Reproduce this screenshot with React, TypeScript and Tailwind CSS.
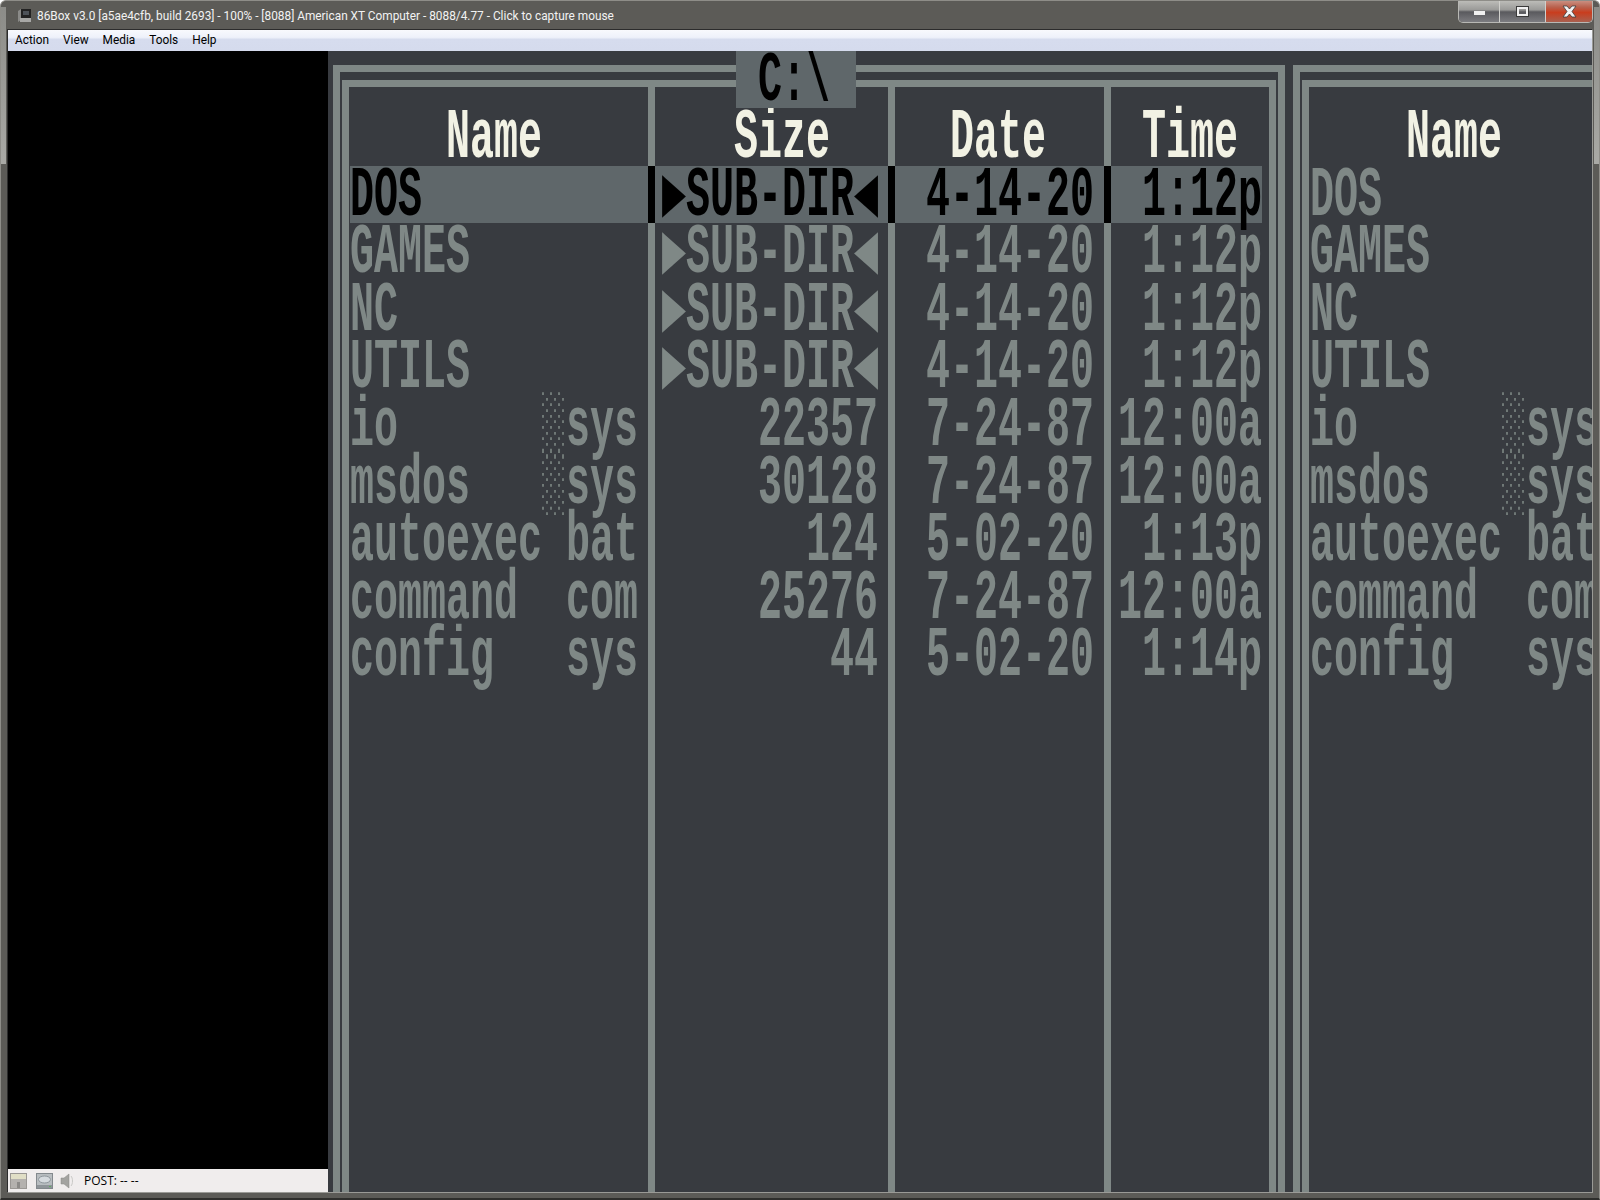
// App.tsx
// 86Box window running Norton Commander on an emulated text screen

const PANEL_ROWS: [string, string, string, string][] = [
  ["DOS", "▶SUB-DIR◀", " 4-14-20", " 1:12p"],
  ["GAMES", "▶SUB-DIR◀", " 4-14-20", " 1:12p"],
  ["NC", "▶SUB-DIR◀", " 4-14-20", " 1:12p"],
  ["UTILS", "▶SUB-DIR◀", " 4-14-20", " 1:12p"],
  ["io      ░sys", "    22357", " 7-24-87", "12:00a"],
  ["msdos   ░sys", "    30128", " 7-24-87", "12:00a"],
  ["autoexec bat", "      124", " 5-02-20", " 1:13p"],
  ["command  com", "    25276", " 7-24-87", "12:00a"],
  ["config   sys", "       44", " 5-02-20", " 1:14p"],
];

// one stretched character-cell run, real text scaled like the 40-column mode
function Cell({ text, className }: { text: string; className: string }) {
  const shade = text.indexOf("░");
  return (
    <div
      className={`h-[57.6px] whitespace-pre font-['Liberation_Mono',monospace] text-[40px] leading-[32px] font-bold origin-top scale-y-[1.78] translate-y-[3px] ${className}`}
    >
      {shade < 0 ? (
        text
      ) : (
        <>
          {text.slice(0, shade)}
          <span className="inline-block scale-y-[0.84] text-[#6f7876]">░</span>
          {text.slice(shade + 1)}
        </>
      )}
    </div>
  );
}

function Separator({ selected = false, height = "h-[57.6px]" }: { selected?: boolean; height?: string }) {
  return (
    <div className={`w-6 ${height} flex justify-center pl-[3px]`}>
      <div className={`w-[7px] h-full ${selected ? "bg-black" : "bg-[#7f8886]"}`} />
    </div>
  );
}

function HeaderRow() {
  return (
    <div className="flex text-[#f2f2e4]">
      <Cell text="    Name" className="w-72" />
      <Separator />
      <Cell text="   Size" className="w-[216px]" />
      <Separator />
      <Cell text="  Date" className="w-48" />
      <Separator />
      <Cell text=" Time" className="w-36" />
    </div>
  );
}

function FileRow({ row, active }: { row: (typeof PANEL_ROWS)[number]; active: boolean }) {
  const color = active ? "text-black bg-[#5f676a]" : "text-[#7f8886]";
  return (
    <div className={`flex ${color}`}>
      <Cell text={row[0]} className="w-72" />
      <Separator selected={active} />
      <Cell text={row[1]} className="w-[216px]" />
      <Separator selected={active} />
      <Cell text={row[2]} className="w-48" />
      <Separator selected={active} />
      <Cell text={row[3]} className="w-36" />
    </div>
  );
}

// column rules only, for the parts of the panel with no text
function EmptyColumns({ height }: { height: string }) {
  return (
    <div className="flex">
      <div className="w-72" />
      <Separator height={height} />
      <div className="w-[216px]" />
      <Separator height={height} />
      <div className="w-48" />
      <Separator height={height} />
    </div>
  );
}

function Panel({ active, title }: { active: boolean; title?: string }) {
  return (
    <div className="relative w-[960px] shrink-0 h-full pl-[5px] pr-[3px] pt-[14px]">
      {/* double line frame, bottom runs past the visible window */}
      <div className="border-x-[7px] border-t-[7px] border-[#7f8886] px-[2px] pt-2 h-[1200px]">
        <div className="border-x-[7px] border-t-[7px] border-[#7f8886] h-full pl-[1px]">
          <div className="w-[912px]">
            <EmptyColumns height="h-[21px]" />
            <HeaderRow />
            {PANEL_ROWS.map((row, i) => (
              <FileRow key={row[0]} row={row} active={active && i === 0} />
            ))}
            <EmptyColumns height="h-[620px]" />
          </div>
        </div>
      </div>
      {title && (
        <div className="absolute left-[408px] top-0 w-[120px] h-[57px] bg-[#5f676a] overflow-hidden">
          <div className="pl-[22px] whitespace-pre font-['Liberation_Mono',monospace] text-[40px] leading-[32px] font-bold text-black origin-top scale-y-[1.78] translate-y-[3px]">
            {title}
          </div>
        </div>
      )}
    </div>
  );
}

function WindowButton({ kind }: { kind: "min" | "max" | "close" }) {
  const width = kind === "min" ? "w-[41px]" : "w-[46px]";
  const bg =
    kind === "close"
      ? "bg-[linear-gradient(#c98e80_0%,#b9604c_30%,#c93d1e_55%,#a9604f_100%)]"
      : "bg-[linear-gradient(#bcbcb8_0%,#9a9a98_42%,#5a5a5e_52%,#7c7c80_100%)]";
  return (
    <div className={`${width} ${bg} h-full flex items-center justify-center border-r border-[#d0d0cc] last:border-r-0`}>
      {kind === "min" && <div className="w-[11px] h-1 bg-[#f0f0f0] mt-[3px]" />}
      {kind === "max" && <div className="w-[11px] h-[9px] border-2 border-[#f0f0f0] outline outline-1 outline-[#3a3a3a]" />}
      {kind === "close" && (
        <svg width="15" height="13" viewBox="0 0 15 13">
          <path d="M1 1h4l2.500 3L10 1h4l-4 5.500 4 5.500h-4L7.500 9 5 12H1l4-5.500z" fill="#f2f2f2" stroke="#3c3c3c" strokeWidth="0.8" />
        </svg>
      )}
    </div>
  );
}

function AppIcon() {
  return (
    <svg width="13" height="14" viewBox="0 0 13 14" className="shrink-0">
      <path d="M0 2l3-2v11l-3 2z" fill="#8a8a88" />
      <rect x="3" y="0" width="10" height="9" fill="#222" />
      <rect x="5" y="2" width="6" height="4" fill="#4d5258" />
      <rect x="2" y="9" width="11" height="4" fill="#a8a8a6" />
    </svg>
  );
}

function StatusIcons() {
  return (
    <>
      <svg width="17" height="16" viewBox="0 0 17 16" className="shrink-0">
        <rect x="0.5" y="0.5" width="16" height="15" fill="#b4b1ae" stroke="#9a9794" />
        <rect x="1" y="1" width="15" height="5" fill="#e0dec6" />
        <rect x="7" y="9" width="3" height="6" fill="#8c8a88" />
      </svg>
      <svg width="17" height="16" viewBox="0 0 17 16" className="shrink-0 ml-[9px]">
        <rect x="0.5" y="0.5" width="16" height="15" fill="#b8bdc0" stroke="#83898d" />
        <ellipse cx="8.500" cy="6.500" rx="6" ry="3.500" fill="#d5dade" stroke="#8f979c" />
        <rect x="1" y="12" width="15" height="3" fill="#8f9599" />
        <rect x="13" y="13" width="2" height="1" fill="#5fae5f" />
      </svg>
      <svg width="17" height="16" viewBox="0 0 17 16" className="shrink-0 ml-[7px]">
        <path d="M1 5h3l5-4v14l-5-4H1z" fill="#a3a3a0" stroke="#8a8a87" strokeWidth="0.5" />
        <path d="M11 3c2 2 2 8 0 10" fill="none" stroke="#c9c9c6" strokeWidth="1" />
      </svg>
    </>
  );
}

export default function App() {
  return (
    <div className="relative w-[1600px] h-[1200px] bg-[#5c5b57] flex flex-col overflow-hidden font-['Roboto',sans-serif] border-t border-x border-[#8e8d88] border-b-2 border-b-[#2e2e2c] rounded-t-[6px]">
      {/* glass highlight on the window frame */}
      <div className="absolute left-0 top-[6px] w-[5px] h-[157px] bg-[linear-gradient(#8c8c88,#a9a9a5)]" />
      <div className="absolute right-0 top-[6px] w-[5px] h-[157px] bg-[linear-gradient(#8c8c88,#a9a9a5)]" />

      {/* title bar */}
      <div className="h-[28px] flex items-start shrink-0">
        <div className="flex items-center gap-[6px] pl-[17px] pt-[6px] flex-1">
          <AppIcon />
          <span className="text-[11.85px] leading-[18px] text-[#f2f2f2] whitespace-nowrap">
            86Box v3.0 [a5ae4cfb, build 2693] - 100% - [8088] American XT Computer - 8088/4.77 - Click to capture mouse
          </span>
        </div>
        <div className="flex h-[22px] mr-[6px] border-x border-b border-[#b8b8b4] rounded-b-[5px] overflow-hidden">
          <WindowButton kind="min" />
          <WindowButton kind="max" />
          <WindowButton kind="close" />
        </div>
      </div>

      {/* client area */}
      <div className="flex-1 min-h-0 mx-[6px] mb-[5px] flex flex-col border border-t-[#2c2c2c] border-l-[#2c2c2c] border-r-[#9a9a96] border-b-[#9a9a96]">
        <div className="h-[21px] shrink-0 flex items-center gap-[14px] pl-[7px] pt-[1px] text-[11.85px] text-black bg-[linear-gradient(#f8f9fd_0%,#eef1fa_35%,#d6dcee_45%,#d5dbed_100%)]">
          <span>Action</span>
          <span>View</span>
          <span>Media</span>
          <span>Tools</span>
          <span>Help</span>
        </div>
        <div className="flex-1 min-h-0 flex overflow-hidden">
          <div className="w-[320px] shrink-0 bg-black flex flex-col justify-end">
            <div className="h-[23px] bg-[#f0eded] flex items-center pl-[2px]">
              <StatusIcons />
              <span className="ml-[7px] text-[12px] text-black font-['Open_Sans',sans-serif]">POST: -- --</span>
            </div>
          </div>
          <div className="flex-1 min-w-0 bg-[#383b40] flex overflow-hidden">
            <Panel active title="C:\" />
            <Panel active={false} />
          </div>
        </div>
      </div>
    </div>
  );
}
